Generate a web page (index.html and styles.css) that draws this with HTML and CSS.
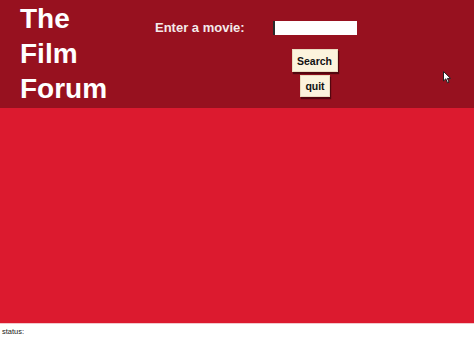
FILE: index.html
```html
<!DOCTYPE html>
<html lang="en">
<head>
    <meta charset="UTF-8">
    <title>The Film Forum</title>
    <link rel="stylesheet" href="styles.css">
</head>
<body>
    <div class="header">
        <h1 class="title">The<br>Film<br>Forum</h1>

        <div class="search-form">
            <label class="label" for="movie">Enter a movie:</label>
            <div class="controls">
                <input type="text" id="movie" class="movie-input">
                <button class="btn btn-search">Search</button>
                <button class="btn btn-quit">quit</button>
            </div>
        </div>

        <!-- mouse pointer left in the capture -->
        <svg class="pointer" width="9" height="13" viewBox="0 0 9 13">
            <path d="M0.5 0.5 L0.5 10 L2.8 7.8 L4.5 11.8 L6 11.2 L4.4 7.4 L7.6 7.4 Z" fill="#fff" stroke="#222" stroke-width="1"/>
        </svg>
    </div>

    <div class="content"></div>

    <div class="status">status:</div>
</body>
</html>
```

FILE: styles.css
```css
body {
    margin: 0;
    padding: 0;
    font-family: "Liberation Sans", Arial, sans-serif;
    background-color: #fff;
}

.header {
    position: relative;
    display: flex;
    height: 108px;
    padding-left: 20px;
    background-color: #97111f;
    box-sizing: border-box;
}

.title {
    width: 135px;
    margin: 1px 0 0 0;
    font-size: 28px;
    line-height: 35px;
    font-weight: bold;
    color: #fff;
}

.search-form {
    display: flex;
    align-items: flex-start;
    padding-top: 21px;
}

.label {
    width: 118px;
    font-size: 13px;
    font-weight: bold;
    line-height: 14px;
    color: #f4eaea;
}

.controls {
    display: flex;
    flex-direction: column;
    align-items: center;
    width: 84px;
}

.movie-input {
    width: 84px;
    height: 14px;
    margin: 0 0 14px 0;
    padding: 0;
    border: none;
    border-left: 2px solid #2a2a2a;
    background-color: #fff;
    box-sizing: border-box;
}

.btn {
    padding: 0;
    margin: 0;
    background-color: #fcf3dd;
    color: #111;
    font-family: "Liberation Sans", Arial, sans-serif;
    font-size: 10.5px;
    font-weight: bold;
    border: 1px solid #e9dcc0;
    box-shadow: 1px 2px 1px rgba(40, 0, 5, 0.6);
    cursor: pointer;
}

.btn-search {
    width: 46px;
    height: 23px;
    margin-left: -1px;
}

.btn-quit {
    width: 30px;
    height: 22px;
    margin-top: 3px;
}

.pointer {
    position: absolute;
    left: 443px;
    top: 71px;
}

.content {
    height: 215px;
    background-color: #dc1a2f;
}

.status {
    height: 15px;
    padding-left: 2px;
    font-size: 7.5px;
    line-height: 15px;
    color: #222;
    background-color: #fff;
    border-top: 1px solid #f3c8cc;
    box-sizing: border-box;
}
```
